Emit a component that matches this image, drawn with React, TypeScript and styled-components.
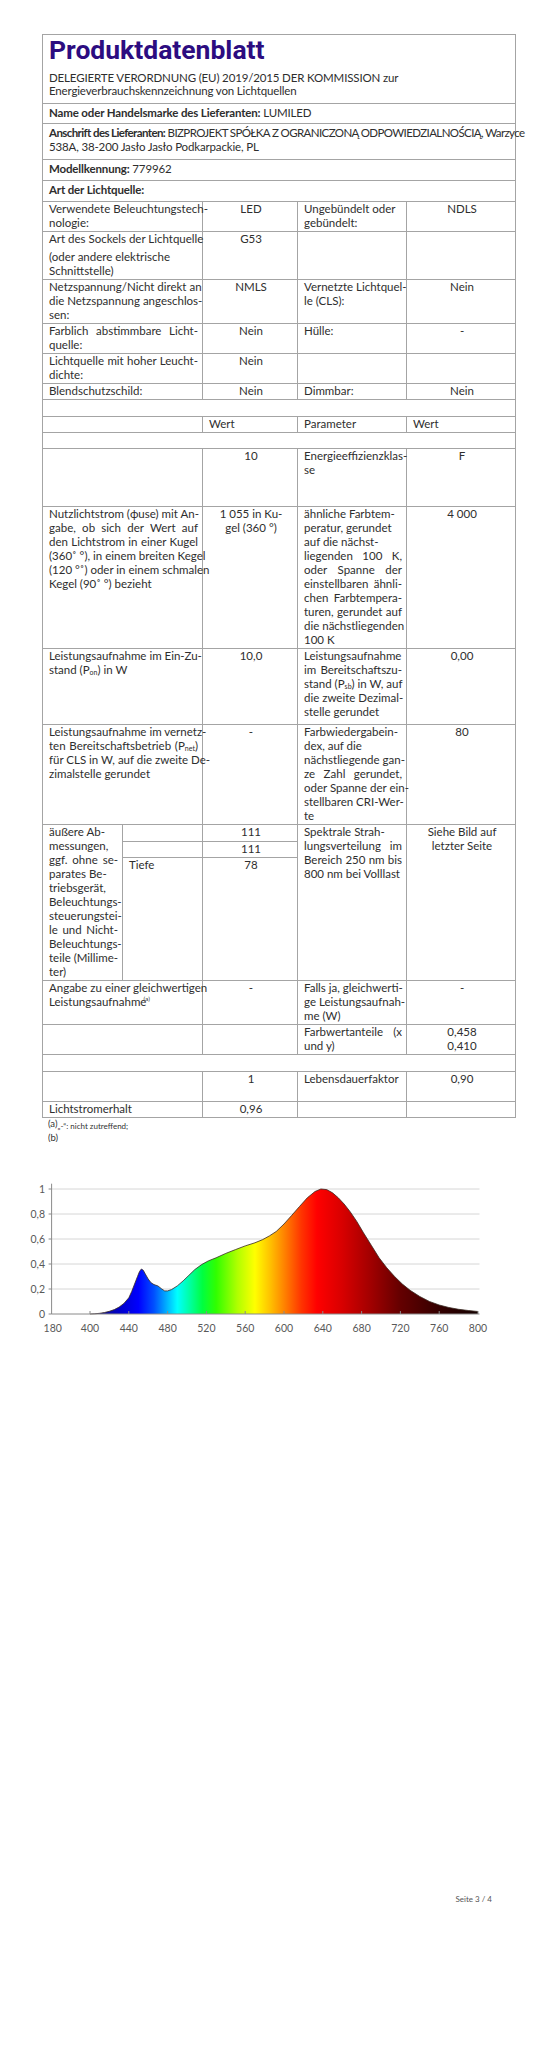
import React from "react";
import styled, { createGlobalStyle } from "styled-components";

const GlobalStyle = createGlobalStyle`
  html, body {
    margin: 0;
    padding: 0;
    background: #fff;
  }
  body {
    font-family: Lato, "Liberation Sans", sans-serif;
    color: #2e2e2e;
  }
`;

const Page = styled.div`
  width: 550px;
  min-height: 2050px;
  padding-top: 34px;
  box-sizing: border-box;
  display: flex;
  flex-direction: column;
`;
const Sheet = styled.table`
  margin-left: 42px;
  width: 473px;
  border-collapse: collapse;
  table-layout: fixed;
  font-size: 11.5px;
  line-height: 14px;
`;
const Row = styled.tr<{ $h: number }>`
  height: ${props => props.$h}px;
`;
const Cell = styled.td<{ $center?: boolean }>`
  border: 1px solid #a4a4a4;
  padding: 0 4px 1px 6px;
  vertical-align: top;
  white-space: nowrap;
  text-align: ${props => (props.$center ? "center" : "left")};
  overflow: visible;
`;
const HeadCell = styled(Cell)`
  padding: 2px 6px 3px;
  letter-spacing: -0.15px;
`;
const Title = styled.h1`
  margin: 0 0 8px;
  font-family: Roboto, Lato, sans-serif;
  font-size: 26.5px;
  line-height: 26px;
  font-weight: 700;
  letter-spacing: 0;
  color: #2c0c80;
`;
const RegText = styled.div`
  line-height: 13.3px;
`;
const Line = styled.span<{ $justify?: boolean; $gap?: number }>`
  display: block;
  white-space: nowrap;
  margin-top: ${props => props.$gap || 0}px;
  ${props =>
    props.$justify ? "text-align: justify; text-align-last: justify;" : ""}
`;
const AddressLine = styled(Line)`
  letter-spacing: -0.6px;
`;
const Sub = styled.sub`
  font-size: 7px;
  line-height: 0;
  vertical-align: -1px;
`;
const Sup = styled.sup`
  font-size: 6.5px;
  line-height: 0;
  margin-left: -3px;
`;
const Notes = styled.div`
  margin-left: 48px;
  height: 24px;
  overflow: hidden;
  font-size: 8px;
  line-height: 12px;
  color: #333;
`;
const NoteMark = styled.span`
  font-size: 9.5px;
  vertical-align: 2px;
`;
const ChartWrap = styled.div`
  margin-top: 29px;
  height: 170px;
`;
const Footer = styled.div`
  margin-top: 553px;
  padding-right: 58px;
  text-align: right;
  font-size: 8px;
  line-height: 10px;
  color: #555;
`;

const L = (props: { j?: boolean; gap?: number; children: React.ReactNode }) => (
  <Line $justify={props.j} $gap={props.gap}>
    {props.children}
  </Line>
);

// spectrum samples, wavelength (nm) -> relative value
const SPECTRUM: [number, number][] = [
  [400, 0], [405, 0.002], [410, 0.006], [415, 0.012], [420, 0.022],
  [425, 0.035], [430, 0.055], [435, 0.085], [440, 0.13], [443, 0.18],
  [446, 0.24], [449, 0.3], [451, 0.34], [453, 0.36], [455, 0.35],
  [457, 0.32], [460, 0.28], [463, 0.25], [466, 0.235], [470, 0.225],
  [474, 0.2], [477, 0.185], [480, 0.185], [484, 0.195], [490, 0.225],
  [496, 0.265], [502, 0.31], [508, 0.355], [515, 0.395], [522, 0.425],
  [530, 0.45], [540, 0.485], [550, 0.515], [560, 0.545], [570, 0.57],
  [578, 0.595], [585, 0.625], [592, 0.66], [600, 0.72], [608, 0.79],
  [616, 0.86], [624, 0.93], [632, 0.98], [638, 1.0], [644, 0.995],
  [650, 0.97], [656, 0.93], [662, 0.88], [668, 0.82], [675, 0.74],
  [682, 0.65], [690, 0.55], [698, 0.45], [706, 0.37], [714, 0.3],
  [722, 0.24], [730, 0.19], [740, 0.14], [750, 0.1], [760, 0.072],
  [770, 0.052], [780, 0.038], [790, 0.028], [800, 0.02],
];

const STOPS: [number, string][] = [
  [410, "#10108a"], [430, "#0000c8"], [450, "#0000ff"], [466, "#0050ff"],
  [480, "#00b8ff"], [490, "#00ffff"], [502, "#00ffa8"], [516, "#00ff40"],
  [530, "#30ff00"], [552, "#b0ff00"], [570, "#ffff00"], [586, "#ffc000"],
  [600, "#ff8400"], [618, "#ff3400"], [634, "#ff0000"], [660, "#d80000"],
  [690, "#a00000"], [720, "#640000"], [760, "#340000"], [800, "#140000"],
];

const X0 = 51.6;
const XR = 479.5;
const Y0 = 143;
const px = (nm: number) => 90 + (nm - 400) * 0.97;
const py = (v: number) => Y0 - v * 125;

const SpectrumChart = () => {
  const pts = SPECTRUM.map(([nm, v]) => `${px(nm).toFixed(1)},${py(v).toFixed(1)}`);
  const area = `M${px(400)},${Y0} L${pts.join(" L")} L${px(800)},${Y0} Z`;
  const line = `M${pts.join(" L")}`;
  const yTicks = [0, 0.2, 0.4, 0.6, 0.8, 1];
  const xTicks = [400, 440, 480, 520, 560, 600, 640, 680, 720, 760, 800];
  return (
    <svg width="550" height="170" viewBox="0 0 550 170">
      <defs>
        <linearGradient id="spec" gradientUnits="userSpaceOnUse" x1={px(400)} x2={px(800)} y1="0" y2="0">
          {STOPS.map(([nm, c]) => (
            <stop key={nm} offset={(nm - 400) / 400} stopColor={c} />
          ))}
        </linearGradient>
      </defs>
      {yTicks.slice(1).map(v => (
        <line key={v} x1={X0} x2={XR} y1={py(v)} y2={py(v)} stroke="#d6d6d6" strokeWidth="1" />
      ))}
      <path d={area} fill="url(#spec)" />
      <path d={line} fill="none" stroke="#3a2a22" strokeWidth="0.8" />
      <line x1={X0} x2={X0} y1="12.7" y2={Y0} stroke="#8a8a8a" strokeWidth="1" />
      <line x1={X0} x2={XR} y1={Y0} y2={Y0} stroke="#8a8a8a" strokeWidth="1" />
      {yTicks.map(v => (
        <line key={v} x1={X0 - 3} x2={X0} y1={py(v)} y2={py(v)} stroke="#8a8a8a" />
      ))}
      {xTicks.map(nm => (
        <line key={nm} x1={px(nm)} x2={px(nm)} y1={Y0 - 3} y2={Y0} stroke="#8a8a8a" />
      ))}
      <g fontFamily="Lato, 'Liberation Sans', sans-serif" fontSize="10.5" fill="#595959">
        {yTicks.map(v => (
          <text key={v} x="45" y={py(v) + 3.8} textAnchor="end">
            {v === 0 ? "0" : v === 1 ? "1" : v.toFixed(1).replace(".", ",")}
          </text>
        ))}
        <text x="52.7" y="161" textAnchor="middle">180</text>
        {xTicks.map(nm => (
          <text key={nm} x={px(nm)} y="161" textAnchor="middle">
            {nm}
          </text>
        ))}
      </g>
    </svg>
  );
};

const App = () => (
  <Page>
    <GlobalStyle />
    <Sheet>
      <colgroup>
        <col style={{ width: 80 }} />
        <col style={{ width: 80 }} />
        <col style={{ width: 95 }} />
        <col style={{ width: 109 }} />
        <col style={{ width: 109 }} />
      </colgroup>
      <tbody>
        <Row $h={69}>
          <HeadCell colSpan={5}>
            <Title>Produktdatenblatt</Title>
            <RegText>
              DELEGIERTE VERORDNUNG (EU) 2019/2015 DER KOMMISSION zur
              <br />
              Energieverbrauchskennzeichnung von Lichtquellen
            </RegText>
          </HeadCell>
        </Row>
        <Row $h={20}>
          <HeadCell colSpan={5}>
            <b>Name oder Handelsmarke des Lieferanten:</b> LUMILED
          </HeadCell>
        </Row>
        <Row $h={36}>
          <HeadCell colSpan={5}>
            <AddressLine>
              <b>Anschrift des Lieferanten:</b> BIZPROJEKT SPÓŁKA Z OGRANICZONĄ
              ODPOWIEDZIALNOŚCIĄ, Warzyce
            </AddressLine>
            <L>538A, 38-200 Jasło Jasło Podkarpackie, PL</L>
          </HeadCell>
        </Row>
        <Row $h={21}>
          <HeadCell colSpan={5}>
            <b>Modellkennung:</b> 779962
          </HeadCell>
        </Row>
        <Row $h={21}>
          <HeadCell colSpan={5}>
            <b>Art der Lichtquelle:</b>
          </HeadCell>
        </Row>

        <Row $h={30}>
          <Cell colSpan={2}>
            <L>Verwendete Beleuchtungstech-</L>
            <L>nologie:</L>
          </Cell>
          <Cell $center>LED</Cell>
          <Cell>
            <L>Ungebündelt oder</L>
            <L>gebündelt:</L>
          </Cell>
          <Cell $center>NDLS</Cell>
        </Row>
        <Row $h={48}>
          <Cell colSpan={2}>
            <L>Art des Sockels der Lichtquelle</L>
            <L gap={4}>(oder andere elektrische</L>
            <L>Schnittstelle)</L>
          </Cell>
          <Cell $center>G53</Cell>
          <Cell />
          <Cell />
        </Row>
        <Row $h={44}>
          <Cell colSpan={2}>
            <L j>Netzspannung/Nicht direkt an</L>
            <L j>die Netzspannung angeschlos-</L>
            <L>sen:</L>
          </Cell>
          <Cell $center>NMLS</Cell>
          <Cell>
            <L j>Vernetzte Lichtquel-</L>
            <L>le (CLS):</L>
          </Cell>
          <Cell $center>Nein</Cell>
        </Row>
        <Row $h={30}>
          <Cell colSpan={2}>
            <L j>Farblich abstimmbare Licht-</L>
            <L>quelle:</L>
          </Cell>
          <Cell $center>Nein</Cell>
          <Cell>Hülle:</Cell>
          <Cell $center>-</Cell>
        </Row>
        <Row $h={30}>
          <Cell colSpan={2}>
            <L j>Lichtquelle mit hoher Leucht-</L>
            <L>dichte:</L>
          </Cell>
          <Cell $center>Nein</Cell>
          <Cell />
          <Cell />
        </Row>
        <Row $h={16}>
          <Cell colSpan={2}>Blendschutzschild:</Cell>
          <Cell $center>Nein</Cell>
          <Cell>Dimmbar:</Cell>
          <Cell $center>Nein</Cell>
        </Row>
        <Row $h={17}>
          <Cell colSpan={5} />
        </Row>
        <Row $h={16}>
          <Cell colSpan={2} />
          <Cell>Wert</Cell>
          <Cell>Parameter</Cell>
          <Cell>Wert</Cell>
        </Row>
        <Row $h={16}>
          <Cell colSpan={5} />
        </Row>
        <Row $h={58}>
          <Cell colSpan={2} />
          <Cell $center>10</Cell>
          <Cell>
            <L>Energieeffizienzklas-</L>
            <L>se</L>
          </Cell>
          <Cell $center>F</Cell>
        </Row>
        <Row $h={141}>
          <Cell colSpan={2}>
            <L j>Nutzlichtstrom (ϕuse) mit An-</L>
            <L j>gabe, ob sich der Wert auf</L>
            <L j>den Lichtstrom in einer Kugel</L>
            <L>(360˚ °), in einem breiten Kegel</L>
            <L>(120 °˚) oder in einem schmalen</L>
            <L>Kegel (90˚ °) bezieht</L>
          </Cell>
          <Cell $center>
            <L>1 055 in Ku-</L>
            <L>gel (360 °)</L>
          </Cell>
          <Cell>
            <L>ähnliche Farbtem-</L>
            <L>peratur, gerundet</L>
            <L>auf die nächst-</L>
            <L j>liegenden 100 K,</L>
            <L j>oder Spanne der</L>
            <L j>einstellbaren ähnli-</L>
            <L j>chen Farbtempera-</L>
            <L j>turen, gerundet auf</L>
            <L>die nächstliegenden</L>
            <L>100 K</L>
          </Cell>
          <Cell $center>4 000</Cell>
        </Row>
        <Row $h={76}>
          <Cell colSpan={2}>
            <L j>Leistungsaufnahme im Ein-Zu-</L>
            <L>
              stand (P<Sub>on</Sub>) in W
            </L>
          </Cell>
          <Cell $center>10,0</Cell>
          <Cell>
            <L>Leistungsaufnahme</L>
            <L j>im Bereitschaftszu-</L>
            <L>
              stand (P<Sub>sb</Sub>) in W, auf
            </L>
            <L j>die zweite Dezimal-</L>
            <L>stelle gerundet</L>
          </Cell>
          <Cell $center>0,00</Cell>
        </Row>
        <Row $h={98}>
          <Cell colSpan={2}>
            <L>Leistungsaufnahme im vernetz-</L>
            <L j>
              ten Bereitschaftsbetrieb (P<Sub>net</Sub>)
            </L>
            <L>für CLS in W, auf die zweite De-</L>
            <L>zimalstelle gerundet</L>
          </Cell>
          <Cell $center>-</Cell>
          <Cell>
            <L>Farbwiedergabein-</L>
            <L>dex, auf die</L>
            <L j>nächstliegende gan-</L>
            <L j>ze Zahl gerundet,</L>
            <L>oder Spanne der ein-</L>
            <L j>stellbaren CRI-Wer-</L>
            <L>te</L>
          </Cell>
          <Cell $center>80</Cell>
        </Row>
        <Row $h={17}>
          <Cell rowSpan={3}>
            <L>äußere Ab-</L>
            <L>messungen,</L>
            <L j>ggf. ohne se-</L>
            <L>parates Be-</L>
            <L>triebsgerät,</L>
            <L>Beleuchtungs-</L>
            <L>steuerungstei-</L>
            <L j>le und Nicht-</L>
            <L>Beleuchtungs-</L>
            <L j>teile (Millime-</L>
            <L>ter)</L>
          </Cell>
          <Cell />
          <Cell $center>111</Cell>
          <Cell rowSpan={3}>
            <L>Spektrale Strah-</L>
            <L j>lungsverteilung im</L>
            <L j>Bereich 250 nm bis</L>
            <L>800 nm bei Volllast</L>
          </Cell>
          <Cell rowSpan={3} $center>
            <L>Siehe Bild auf</L>
            <L>letzter Seite</L>
          </Cell>
        </Row>
        <Row $h={16}>
          <Cell />
          <Cell $center>111</Cell>
        </Row>
        <Row $h={123}>
          <Cell>Tiefe</Cell>
          <Cell $center>78</Cell>
        </Row>
        <Row $h={44}>
          <Cell colSpan={2}>
            <L>Angabe zu einer gleichwertigen</L>
            <L>
              Leistungsaufnahme<Sup>(a)</Sup>
            </L>
          </Cell>
          <Cell $center>-</Cell>
          <Cell>
            <L>Falls ja, gleichwerti-</L>
            <L j>ge Leistungsaufnah-</L>
            <L>me (W)</L>
          </Cell>
          <Cell $center>-</Cell>
        </Row>
        <Row $h={30}>
          <Cell colSpan={2} />
          <Cell />
          <Cell>
            <L j>Farbwertanteile (x</L>
            <L>und y)</L>
          </Cell>
          <Cell $center>
            <L>0,458</L>
            <L>0,410</L>
          </Cell>
        </Row>
        <Row $h={17}>
          <Cell colSpan={5} />
        </Row>
        <Row $h={30}>
          <Cell colSpan={2} />
          <Cell $center>1</Cell>
          <Cell>Lebensdauerfaktor</Cell>
          <Cell $center>0,90</Cell>
        </Row>
        <Row $h={16}>
          <Cell colSpan={2}>Lichtstromerhalt</Cell>
          <Cell $center>0,96</Cell>
          <Cell />
          <Cell />
        </Row>
      </tbody>
    </Sheet>
    <Notes>
      <div>
        <NoteMark>(a)</NoteMark>„-“: nicht zutreffend;
      </div>
      <div>
        <NoteMark>(b)</NoteMark>
      </div>
    </Notes>
    <ChartWrap>
      <SpectrumChart />
    </ChartWrap>
    <Footer>Seite 3 / 4</Footer>
  </Page>
);

export default App;
